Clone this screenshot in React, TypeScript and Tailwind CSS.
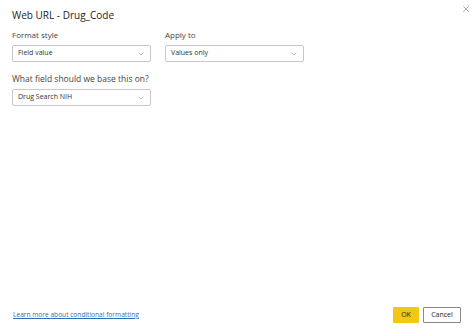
import { ChevronDown, X } from "lucide-react";

function Select({ value, width }: { value: string; width: string }) {
  return (
    <div className={`${width} h-[17px] border border-[#c8c8c8] rounded-[2px] bg-white flex items-center justify-between pl-[5px] pr-[5px]`}>
      <span className="text-[7px] text-[#333]">{value}</span>
      <ChevronDown size={8} strokeWidth={1.5} className="text-[#888]" />
    </div>
  );
}

export default function App() {
  return (
    <div
      className="w-[474px] h-[335px] bg-white flex flex-col text-[#252423]"
      style={{ fontFamily: '"Segoe UI", "Open Sans", sans-serif' }}
    >
      <div className="flex items-start justify-between pl-[12px] pr-[3px] pt-[3px]">
        <h1 className="text-[10px] leading-none mt-[7px]">Web URL - Drug_Code</h1>
        <X size={10} strokeWidth={1.2} className="text-[#666] mt-[1px]" />
      </div>

      <div className="px-[12px] pt-[10px] flex gap-[14px]">
        <div className="flex flex-col">
          <label className="text-[8px] leading-[10px] text-[#444] mb-[5px]">Format style</label>
          <Select value="Field value" width="w-[139px]" />
        </div>
        <div className="flex flex-col">
          <label className="text-[8px] leading-[10px] text-[#444] mb-[5px]">Apply to</label>
          <Select value="Values only" width="w-[139px]" />
        </div>
      </div>

      <div className="px-[12px] pt-[12px] flex flex-col">
        <label className="text-[8.5px] leading-[10px] text-[#444] mb-[5px]">What field should we base this on?</label>
        <Select value="Drug Search NIH" width="w-[139px]" />
      </div>

      <div className="flex-1" />

      <div className="flex items-center justify-between pl-[13px] pr-[13px] pb-[12px]">
        <a className="text-[6.6px] text-[#2e6fba] underline">Learn more about conditional formatting</a>
        <div className="flex gap-[4px]">
          <button className="w-[26px] h-[16px] bg-[#f2c811] text-[7px] text-[#252423] rounded-[1px]">OK</button>
          <button className="w-[38px] h-[16px] bg-white border border-[#8a8886] text-[7px] text-[#252423] rounded-[1px]">Cancel</button>
        </div>
      </div>
    </div>
  );
}
